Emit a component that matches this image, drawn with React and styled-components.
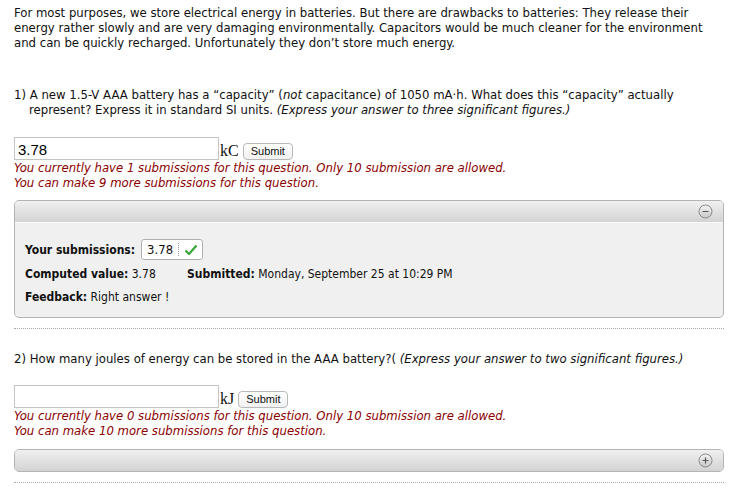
import styled, { createGlobalStyle } from "styled-components";

const GlobalStyle = createGlobalStyle`
  body {
    margin: 0;
    background: #fff;
    color: #111;
    font-family: "DejaVu Sans Condensed", "DejaVu Sans", sans-serif;
    font-size: 13px;
  }
`;

function CircleIcon({ plus }) {
  return (
    <svg width="15" height="15" viewBox="0 0 15 15">
      <defs>
        <linearGradient id={plus ? "gp" : "gm"} x1="0" y1="0" x2="0" y2="1">
          <stop offset="0" stopColor="#f4f4f4" />
          <stop offset="1" stopColor="#c8c8c8" />
        </linearGradient>
      </defs>
      <circle cx="7.5" cy="7.5" r="6.5" fill={`url(#${plus ? "gp" : "gm"})`} stroke="#8a8a8a" strokeWidth="1" />
      <path d="M4.5 7.5h6" stroke="#555" strokeWidth="1.2" />
      {plus && <path d="M7.5 4.5v6" stroke="#555" strokeWidth="1.2" />}
    </svg>
  );
}

function Check() {
  return (
    <svg width="14" height="12" viewBox="0 0 14 12">
      <path d="M1.5 6.5l3.5 3.5 7.5-8.5" fill="none" stroke="#3aa63a" strokeWidth="2.2" strokeLinejoin="round" />
    </svg>
  );
}

function AnswerForm({ value, unit, count, left, top }) {
  return (
    <Form $top={top}>
      <AnswerRow>
        <AnswerInput defaultValue={value} />
        <Unit>{unit}</Unit>
        <SubmitButton>Submit</SubmitButton>
      </AnswerRow>
      <Warning>You currently have {count} submissions for this question. Only 10 submission are allowed.</Warning>
      <Warning>You can make {left} more submissions for this question.</Warning>
    </Form>
  );
}

function App() {
  return (
    <Page>
      <GlobalStyle />
      <Intro>
        For most purposes, we store electrical energy in batteries. But there are drawbacks to batteries: They release their
        energy rather slowly and are very damaging environmentally. Capacitors would be much cleaner for the environment
        and can be quickly recharged. Unfortunately they don’t store much energy.
      </Intro>

      <Question>
        1) A new 1.5-V AAA battery has a “capacity” (<i>not</i> capacitance) of 1050 mA·h. What does this “capacity” actually
        represent? Express it in standard SI units. <i>(Express your answer to three significant figures.)</i>
      </Question>

      <AnswerForm value="3.78" unit="kC" count={1} left={9} top={20} />

      <Panel>
        <PanelHead>
          <CircleIcon />
        </PanelHead>
        <PanelBody>
          <InfoRow>
            <b>Your submissions:</b>
            <SubBox>
              <span>3.78</span>
              <Dots />
              <Check />
            </SubBox>
          </InfoRow>
          <InfoRow>
            <Cell><b>Computed value:</b> 3.78</Cell>
            <span><b>Submitted:</b> Monday, September 25 at 10:29 PM</span>
          </InfoRow>
          <InfoRow>
            <span><b>Feedback:</b> Right answer !</span>
          </InfoRow>
        </PanelBody>
      </Panel>
      <Divider />

      <Question $top={22}>
        2) How many joules of energy can be stored in the AAA battery?( <i>(Express your answer to two significant figures.)</i>
      </Question>

      <AnswerForm value="" unit="kJ" count={0} left={10} top={19} />

      <Panel $closed>
        <PanelHead $closed>
          <CircleIcon plus />
        </PanelHead>
      </Panel>
      <Divider />
    </Page>
  );
}

const Page = styled.div`
  width: 710px;
  padding: 5px 0 0 14px;
`;

const Intro = styled.p`
  margin: 0;
  line-height: 15px;
`;

const Question = styled.p`
  margin: ${(p) => p.$top ?? 37}px 0 0;
  line-height: 15px;
  padding: 0 40px 0 15px;
  text-indent: -15px;
`;

const Form = styled.div`
  margin-top: ${(p) => p.$top}px;
`;

const AnswerRow = styled.div`
  display: flex;
  align-items: flex-end;
  height: 23px;
`;

const AnswerInput = styled.input`
  box-sizing: border-box;
  width: 205px;
  height: 23px;
  border: 1px solid #c4c4c4;
  padding: 1px 3px 0;
  font-family: "Liberation Sans", Arial, sans-serif;
  font-size: 15px;
  color: #000;
  outline: none;
`;

const Unit = styled.span`
  font-family: "Liberation Serif", "Times New Roman", serif;
  font-size: 16px;
  margin: 0 4px 0 1px;
  line-height: 18px;
`;

const SubmitButton = styled.button`
  height: 17px;
  padding: 0 7px;
  border: 1px solid #b8b8b8;
  border-radius: 4px;
  background: linear-gradient(#ffffff, #f1f1f1);
  font-family: "Liberation Sans", Arial, sans-serif;
  font-size: 11px;
  color: #111;
  line-height: 15px;
`;

const Warning = styled.div`
  color: #8b0000;
  font-style: italic;
  line-height: 15px;
  &:first-of-type {
    margin-top: 1px;
  }
`;

const Panel = styled.div`
  margin-top: ${(p) => (p.$closed ? 11 : 10)}px;
  border: 1px solid #b4b4b4;
  border-radius: 5px;
  background: #f0f0f0;
  overflow: hidden;
`;

const PanelHead = styled.div`
  height: 21px;
  display: flex;
  align-items: center;
  justify-content: flex-end;
  padding-right: 10px;
  background: linear-gradient(#f0f0f0, #d3d3d3);
  border-bottom: ${(p) => (p.$closed ? "none" : "1px solid #fafafa")};
`;

const PanelBody = styled.div`
  padding: 16px 10px 11px;
  font-size: 12px;
  display: flex;
  flex-direction: column;
  gap: 4px;
`;

const InfoRow = styled.div`
  display: flex;
  align-items: center;
  gap: 6px;
  min-height: 19px;
`;

const Cell = styled.span`
  width: 156px;
`;

const SubBox = styled.span`
  display: inline-flex;
  align-items: center;
  gap: 5px;
  height: 19px;
  padding: 0 4px 0 5px;
  border: 1px solid #b0b0b0;
  border-radius: 3px;
  background: #fff;
  font-size: 13px;
`;

const Dots = styled.span`
  width: 0;
  height: 13px;
  border-left: 1px dotted #999;
`;

const Divider = styled.hr`
  margin: 10px 0 0;
  border: none;
  border-top: 1px dotted #aaa;
`;

export default App;
